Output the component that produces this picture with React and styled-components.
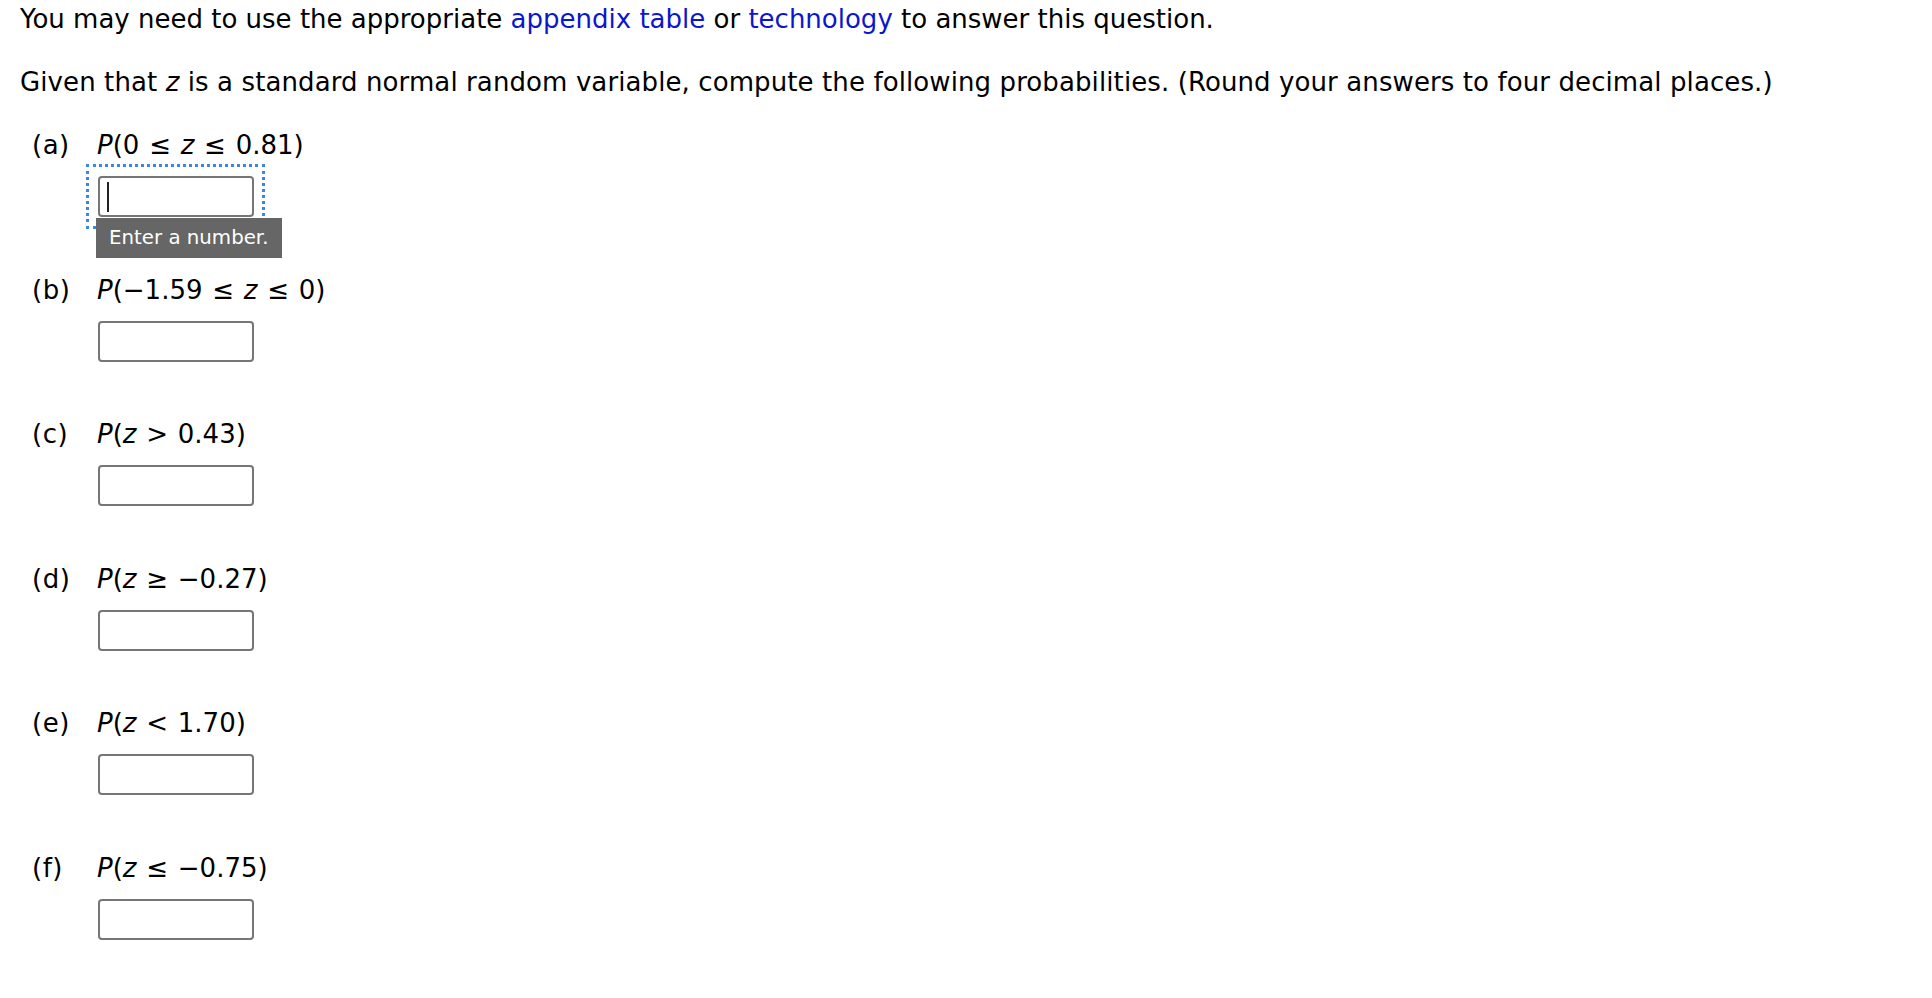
import React from "react";
import styled, { createGlobalStyle } from "styled-components";

const GlobalStyle = createGlobalStyle`
  html, body {
    margin: 0;
    padding: 0;
    background: #fff;
  }
  body {
    font-family: Verdana, "DejaVu Sans", sans-serif;
    color: #000;
  }
`;

const Page = styled.div`
  padding: 0 20px;
  font-size: 26px;
  line-height: 38px;
`;

const Intro = styled.p`
  margin: 0 0 25px;
`;

const Link = styled.span`
  color: #0c16cc;
`;

const Question = styled.p`
  margin: 0 0 25px;
  letter-spacing: 0.1px;
`;

const PartList = styled.div`
  display: flex;
  flex-direction: column;
  padding-left: 12px;
`;

const Part = styled.div`
  display: grid;
  grid-template-columns: 65px auto;
  height: 144.6px;
  align-content: start;
`;

const PartLabel = styled.span`
  letter-spacing: 0.5px;
`;

const Expr = styled.span`
  white-space: nowrap;
  word-spacing: 1.5px;
`;

const Var = styled.i``;

const AnswerSlot = styled.div`
  grid-column: 2;
  position: relative;
  width: 156px;
  margin-top: 12px;
  margin-left: 1px;
`;

const FocusRing = styled.div`
  position: absolute;
  left: -12px;
  top: -12px;
  width: 179px;
  height: 65px;
  border: 3px dotted #3a86e4;
  box-sizing: border-box;
`;

const Input = styled.div`
  position: relative;
  box-sizing: border-box;
  width: 156px;
  height: 41px;
  border: 2px solid #767676;
  border-radius: 4px;
  background: #fff;
`;

const Caret = styled.span`
  position: absolute;
  left: 7px;
  top: 4px;
  width: 2px;
  height: 30px;
  background: #222;
`;

const Tooltip = styled.div`
  position: absolute;
  left: -2px;
  top: 42px;
  width: 186px;
  height: 40px;
  background: #666;
  color: #fff;
  font-size: 19.8px;
  line-height: 40px;
  padding-left: 13px;
  box-sizing: border-box;
  white-space: nowrap;
`;

const parts = [
  { label: "(a)", expr: <>(0 ≤ <Var>z</Var> ≤ 0.81)</>, focused: true },
  { label: "(b)", expr: <>(−1.59 ≤ <Var>z</Var> ≤ 0)</> },
  { label: "(c)", expr: <>(<Var>z</Var> &gt; 0.43)</> },
  { label: "(d)", expr: <>(<Var>z</Var> ≥ −0.27)</> },
  { label: "(e)", expr: <>(<Var>z</Var> &lt; 1.70)</> },
  { label: "(f)", expr: <>(<Var>z</Var> ≤ −0.75)</> },
];

export default function App() {
  return (
    <>
      <GlobalStyle />
      <Page>
        <Intro>
          You may need to use the appropriate <Link>appendix table</Link> or{" "}
          <Link>technology</Link> to answer this question.
        </Intro>
        <Question>
          Given that <Var>z</Var> is a standard normal random variable, compute
          the following probabilities. (Round your answers to four decimal
          places.)
        </Question>
        <PartList>
          {parts.map((p) => (
            <Part key={p.label}>
              <PartLabel>{p.label}</PartLabel>
              <Expr>
                <Var>P</Var>
                {p.expr}
              </Expr>
              <AnswerSlot>
                {p.focused && <FocusRing />}
                <Input>{p.focused && <Caret />}</Input>
                {p.focused && <Tooltip>Enter a number.</Tooltip>}
              </AnswerSlot>
            </Part>
          ))}
        </PartList>
      </Page>
    </>
  );
}
